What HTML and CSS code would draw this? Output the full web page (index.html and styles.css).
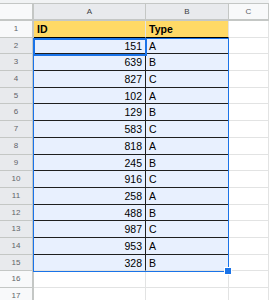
FILE: index.html
```html
<!DOCTYPE html>
<html>
<head>
<meta charset="utf-8">
<link rel="stylesheet" href="styles.css">
</head>
<body>
<div class="sheet">
  <div class="grid">
    <div class="corner"></div>
    <div class="colhead sel">A</div>
    <div class="colhead sel">B</div>
    <div class="colhead">C</div>

    <div class="rowhead">1</div>
    <div class="cell hdr">ID</div>
    <div class="cell hdr">Type</div>
    <div class="cell"></div>

    <div class="rowhead sel">2</div><div class="cell num data">151</div><div class="cell data">A</div><div class="cell"></div>
    <div class="rowhead sel">3</div><div class="cell num data">639</div><div class="cell data">B</div><div class="cell"></div>
    <div class="rowhead sel">4</div><div class="cell num data">827</div><div class="cell data">C</div><div class="cell"></div>
    <div class="rowhead sel">5</div><div class="cell num data">102</div><div class="cell data">A</div><div class="cell"></div>
    <div class="rowhead sel">6</div><div class="cell num data">129</div><div class="cell data">B</div><div class="cell"></div>
    <div class="rowhead sel">7</div><div class="cell num data">583</div><div class="cell data">C</div><div class="cell"></div>
    <div class="rowhead sel">8</div><div class="cell num data">818</div><div class="cell data">A</div><div class="cell"></div>
    <div class="rowhead sel">9</div><div class="cell num data">245</div><div class="cell data">B</div><div class="cell"></div>
    <div class="rowhead sel">10</div><div class="cell num data">916</div><div class="cell data">C</div><div class="cell"></div>
    <div class="rowhead sel">11</div><div class="cell num data">258</div><div class="cell data">A</div><div class="cell"></div>
    <div class="rowhead sel">12</div><div class="cell num data">488</div><div class="cell data">B</div><div class="cell"></div>
    <div class="rowhead sel">13</div><div class="cell num data">987</div><div class="cell data">C</div><div class="cell"></div>
    <div class="rowhead sel">14</div><div class="cell num data">953</div><div class="cell data">A</div><div class="cell"></div>
    <div class="rowhead sel">15</div><div class="cell num data last">328</div><div class="cell data last">B</div><div class="cell"></div>

    <div class="rowhead">16</div><div class="cell"></div><div class="cell"></div><div class="cell"></div>
    <div class="rowhead">17</div><div class="cell"></div><div class="cell"></div><div class="cell"></div>
  </div>
  <div class="selection"><div class="handle"></div></div>
  <div class="active"></div>
</div>
</body>
</html>
```
FILE: styles.css
```css
html, body {
  margin: 0;
  padding: 0;
  background: #ffffff;
}
body {
  font-family: "Liberation Sans", Arial, sans-serif;
}
.sheet {
  position: relative;
  width: 269px;
  height: 300px;
  overflow: hidden;
  border-top: 3px solid #f1f3f4;
  box-sizing: border-box;
}
.grid {
  display: grid;
  grid-template-columns: 34px 112px 83px 1fr;
  grid-template-rows: 18px repeat(17, 16.7px);
}
.grid > div {
  box-sizing: border-box;
  border-right: 1px solid #e2e3e3;
  border-bottom: 1px solid #e2e3e3;
  overflow: hidden;
  white-space: nowrap;
}
.corner {
  background: #f8f9fa;
  border-right: 2px solid #c4c7c5 !important;
  border-bottom: 2px solid #c4c7c5 !important;
  border-top: 1px solid #c4c7c5;
}
.colhead {
  background: #f8f9fa;
  color: #5f6368;
  font-size: 8px;
  text-align: center;
  line-height: 16px;
  border-top: 1px solid #c4c7c5;
  border-right: 1px solid #c4c7c5 !important;
  border-bottom: 2px solid #c4c7c5 !important;
}
.colhead.sel {
  background: #e8eaed;
  color: #3c4043;
}
.rowhead {
  background: #f8f9fa;
  color: #5f6368;
  font-size: 8px;
  text-align: center;
  line-height: 16px;
  border-right: 2px solid #c4c7c5 !important;
  border-bottom: 1px solid #c4c7c5 !important;
}
.rowhead.sel {
  background: #e8eaed;
}
.cell {
  font-size: 10.5px;
  color: #000;
  line-height: 16px;
  padding: 0 3px;
}
.cell.hdr {
  background: #ffd966;
  font-weight: bold;
  border-bottom: 1px solid #000 !important;
}
.cell.data {
  background: #e8f0fe;
  border-right: 1px solid #1f1f1f !important;
  border-bottom: 1px solid #1f1f1f !important;
}
.cell.data.last {
  border-bottom: 1px solid #e2e3e3 !important;
}
.cell.num {
  text-align: right;
}
.selection {
  position: absolute;
  left: 33px;
  top: 34.7px;
  width: 196px;
  height: 234.8px;
  border: 1px solid #1a73e8;
  box-sizing: border-box;
}
.handle {
  position: absolute;
  right: -4px;
  bottom: -4px;
  width: 6px;
  height: 6px;
  background: #1a73e8;
  border: 1px solid #fff;
}
.active {
  position: absolute;
  left: 33px;
  top: 34.7px;
  width: 114px;
  height: 18.7px;
  border: 2px solid #1a73e8;
  box-sizing: border-box;
}
```
